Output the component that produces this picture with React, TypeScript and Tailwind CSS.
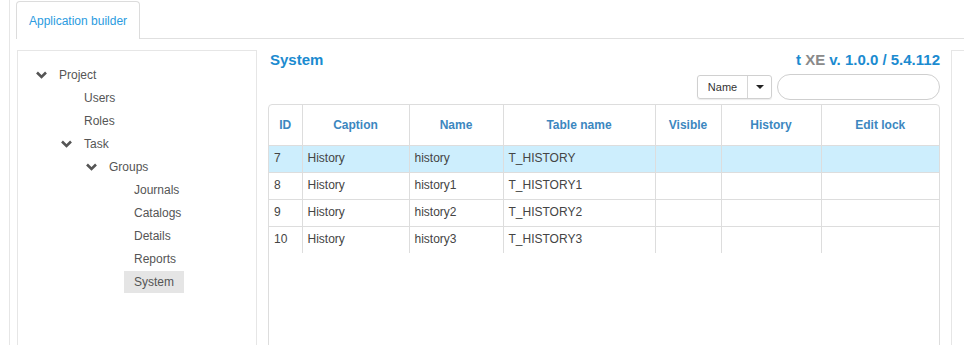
import React from "react";

const tree: { label: string; level: number; chevron?: boolean; active?: boolean }[] = [
  { label: "Project", level: 0, chevron: true },
  { label: "Users", level: 1 },
  { label: "Roles", level: 1 },
  { label: "Task", level: 1, chevron: true },
  { label: "Groups", level: 2, chevron: true },
  { label: "Journals", level: 3 },
  { label: "Catalogs", level: 3 },
  { label: "Details", level: 3 },
  { label: "Reports", level: 3 },
  { label: "System", level: 3, active: true },
];

const cols = [
  { name: "ID", w: 34 },
  { name: "Caption", w: 107 },
  { name: "Name", w: 94 },
  { name: "Table name", w: 152 },
  { name: "Visible", w: 66 },
  { name: "History", w: 100 },
  { name: "Edit lock", w: 119 },
];

const rows = [
  ["7", "History", "history", "T_HISTORY"],
  ["8", "History", "history1", "T_HISTORY1"],
  ["9", "History", "history2", "T_HISTORY2"],
  ["10", "History", "history3", "T_HISTORY3"],
];

function Chevron() {
  return (
    <svg width="11" height="8" viewBox="0 0 11 8" className="block">
      <path d="M1 1.5 L5.5 6 L10 1.5" fill="none" stroke="#555" strokeWidth="2.6" strokeLinejoin="miter" />
    </svg>
  );
}

export default function App() {
  return (
    <div
      className="relative h-[345px] w-[964px] overflow-hidden bg-white text-[12px] text-[#444]"
      style={{ fontFamily: '"Liberation Sans", Arial, sans-serif' }}
    >
      <div className="ml-[9px] h-full border-l border-[#e6e6e6] pl-[6px]">
        {/* tab row */}
        <div className="flex h-[39px]">
          <div className="mt-[1px] flex h-[38px] w-[124px] items-center rounded-t-[4px] border border-b-0 border-[#dcdcdc] pl-[12px] text-[12px] text-[#2b9be0]">
            Application builder
          </div>
          <div className="flex-1 border-b border-[#e0e0e0]" />
        </div>

        <div className="mt-[11px] flex">
          {/* left tree panel */}
          <div className="ml-[1px] h-[300px] w-[240px] shrink-0 border border-[#e6e6e6] pt-[12px] text-[#555]">
            {tree.map((t) => (
              <div
                key={t.label}
                className="flex h-[23px] items-center"
                style={{ paddingLeft: 18 + t.level * 25 }}
              >
                <div className="flex w-[13px] items-center">{t.chevron ? <Chevron /> : null}</div>
                <div
                  className={
                    "h-[22px] px-[10px] leading-[22px] " + (t.active ? "bg-[#e5e5e5]" : "")
                  }
                >
                  {t.label}
                </div>
              </div>
            ))}
          </div>

          {/* main */}
          <div className="ml-[11px] w-[672px] shrink-0">
            <div className="flex h-[20px] items-center justify-between">
              <div className="ml-[2px] text-[15px] font-bold text-[#1b8bd0]">System</div>
              <div className="text-[15px] font-bold text-[#1b8bd0]">
                t <span className="text-[#8a8a8a]">XE</span> v. 1.0.0 / 5.4.112
              </div>
            </div>
            <div className="mt-[4px] flex h-[26px] items-center justify-end">
              <div className="flex h-[24px] items-stretch rounded-[3px] border border-[#d0d0d0] shadow-[0_1px_1px_rgba(0,0,0,0.08)]">
                <div className="flex w-[49px] items-center justify-center text-[11px] text-[#333]">Name</div>
                <div className="flex w-[24px] items-center justify-center border-l border-[#d6d6d6]">
                  <svg width="8" height="4" viewBox="0 0 8 4">
                    <path d="M0 0 L8 0 L4 4 Z" fill="#222" />
                  </svg>
                </div>
              </div>
              <div className="ml-[5px] h-[26px] w-[163px] rounded-full border border-[#cfcfcf]" />
            </div>

            {/* table */}
            <div className="mt-[4px] h-[260px] overflow-hidden rounded-t-[4px] border border-[#dddddd]">
              <table className="border-collapse" style={{ tableLayout: "fixed", width: 670 }}>
                <colgroup>
                  {cols.map((c, i) => (
                    <col key={c.name} style={{ width: i === 0 ? c.w - 1 : i === cols.length - 1 ? c.w - 1 : c.w }} />
                  ))}
                </colgroup>
                <thead>
                  <tr className="h-[40px] border-b border-[#dddddd]">
                    {cols.map((c, i) => (
                      <th
                        key={c.name}
                        className={
                          "p-0 text-center text-[12px] font-bold text-[#3c87bf] " +
                          (i > 0 ? "border-l border-[#dddddd]" : "")
                        }
                      >
                        {c.name}
                      </th>
                    ))}
                  </tr>
                </thead>
                <tbody>
                  {rows.map((r, ri) => (
                    <tr
                      key={r[0]}
                      className={
                        "h-[27px] " +
                        (ri < rows.length - 1 ? "border-b border-[#dddddd] " : "") +
                        (ri === 0 ? "bg-[#cdeefd]" : "")
                      }
                    >
                      {cols.map((c, i) => (
                        <td
                          key={c.name}
                          className={
                            "truncate px-[5px] pb-[2px] pt-0 text-[12px] text-[#444] " +
                            (i > 0 ? "border-l border-[#dddddd]" : "")
                          }
                        >
                          {r[i] ?? ""}
                        </td>
                      ))}
                    </tr>
                  ))}
                </tbody>
              </table>
            </div>
          </div>

          {/* right panel */}
          <div className="ml-[11px] h-[300px] flex-1 border-l border-t border-[#e6e6e6]" />
        </div>
      </div>
    </div>
  );
}
